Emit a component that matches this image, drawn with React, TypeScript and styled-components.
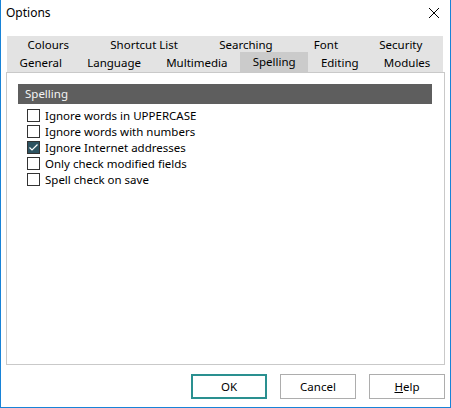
import styled, { createGlobalStyle } from 'styled-components';

const GlobalStyle = createGlobalStyle`
    html, body {
        margin: 0;
        padding: 0;
        background: #ffffff;
    }
    * {
        box-sizing: border-box;
    }
`;

const Window = styled.div`
    width: 451px;
    height: 408px;
    background: #ffffff;
    border: 1px solid #1883d7;
    border-top: none;
    display: flex;
    flex-direction: column;
    font-family: "Noto Sans", "Open Sans", sans-serif;
    font-size: 11.5px;
    color: #000;
`;

const TitleBar = styled.div`
    height: 36px;
    display: flex;
    align-items: flex-start;
    justify-content: space-between;
    padding: 4px 10px 0 5px;
`;

const Title = styled.div`
    font-size: 12px;
    line-height: 18px;
`;

const CloseButton = styled.div`
    width: 12px;
    height: 12px;
    margin-top: 3px;
    display: flex;
`;

const TabStrip = styled.div`
    margin-left: 6px;
    width: 436px;
    background: #e3e3e3;
    display: flex;
    flex-direction: column;
`;

const TabRow = styled.div`
    display: flex;
    height: 18px;
    align-items: flex-end;
`;

const Tab = styled.div<{ $active?: boolean }>`
    flex: 1 0 auto;
    text-align: center;
    white-space: nowrap;
    height: ${(p) => (p.$active ? '20px' : '18px')};
    line-height: ${(p) => (p.$active ? '20px' : '18px')};
    background: ${(p) => (p.$active ? '#cbcbcb' : 'transparent')};
`;

const Panel = styled.div`
    margin-left: 5px;
    width: 439px;
    height: 293px;
    border: 1px solid #c9c9c9;
    padding: 11px 12px 0 11px;
`;

const SectionHeader = styled.div`
    height: 20px;
    background: #5e5e5e;
    color: #f4f4f4;
    padding-left: 7px;
    line-height: 19px;
`;

const OptionList = styled.div`
    display: flex;
    flex-direction: column;
    padding: 3px 0 0 9px;
`;

const OptionRow = styled.label`
    display: flex;
    align-items: center;
    height: 16px;
    gap: 5px;
    white-space: nowrap;
`;

const Box = styled.span<{ $checked?: boolean }>`
    width: 13px;
    height: 13px;
    border: 1px solid #333333;
    background: ${(p) => (p.$checked ? '#2d5361' : '#ffffff')};
    display: flex;
    align-items: center;
    justify-content: center;
    flex: none;
`;

const ButtonBar = styled.div`
    display: flex;
    justify-content: flex-end;
    gap: 13px;
    padding: 9px 5px 0 0;
`;

const Button = styled.div<{ $default?: boolean }>`
    width: 76px;
    height: 25px;
    background: #ffffff;
    border: ${(p) => (p.$default ? '2px solid #2a9090' : '1px solid #adadad')};
    display: flex;
    align-items: center;
    justify-content: center;
`;

const Mnemonic = styled.span`
    text-decoration: underline;
`;

const topTabs = ['Colours', 'Shortcut List', 'Searching', 'Font', 'Security'];
const bottomTabs = ['General', 'Language', 'Multimedia', 'Spelling', 'Editing', 'Modules'];

const options = [
    { label: 'Ignore words in UPPERCASE', checked: false },
    { label: 'Ignore words with numbers', checked: false },
    { label: 'Ignore Internet addresses', checked: true },
    { label: 'Only check modified fields', checked: false },
    { label: 'Spell check on save', checked: false },
];

export default function App() {
    return (
        <>
            <GlobalStyle />
            <Window>
                <TitleBar>
                    <Title>Options</Title>
                    <CloseButton>
                        <svg width="12" height="12" viewBox="0 0 12 12">
                            <path d="M1 1 L11 11 M11 1 L1 11" stroke="#000" strokeWidth="1" fill="none" />
                        </svg>
                    </CloseButton>
                </TitleBar>
                <TabStrip>
                    <TabRow>
                        {topTabs.map((t) => (
                            <Tab key={t}>{t}</Tab>
                        ))}
                    </TabRow>
                    <TabRow>
                        {bottomTabs.map((t) => (
                            <Tab key={t} $active={t === 'Spelling'}>{t}</Tab>
                        ))}
                    </TabRow>
                </TabStrip>
                <Panel>
                    <SectionHeader>Spelling</SectionHeader>
                    <OptionList>
                        {options.map((o) => (
                            <OptionRow key={o.label}>
                                <Box $checked={o.checked}>
                                    {o.checked && (
                                        <svg width="11" height="11" viewBox="0 0 11 11">
                                            <path d="M1.5 5.5 L4 8 L9.5 2.5" stroke="#fff" strokeWidth="1.2" fill="none" />
                                        </svg>
                                    )}
                                </Box>
                                {o.label}
                            </OptionRow>
                        ))}
                    </OptionList>
                </Panel>
                <ButtonBar>
                    <Button $default>OK</Button>
                    <Button>Cancel</Button>
                    <Button><span><Mnemonic>H</Mnemonic>elp</span></Button>
                </ButtonBar>
            </Window>
        </>
    );
}
